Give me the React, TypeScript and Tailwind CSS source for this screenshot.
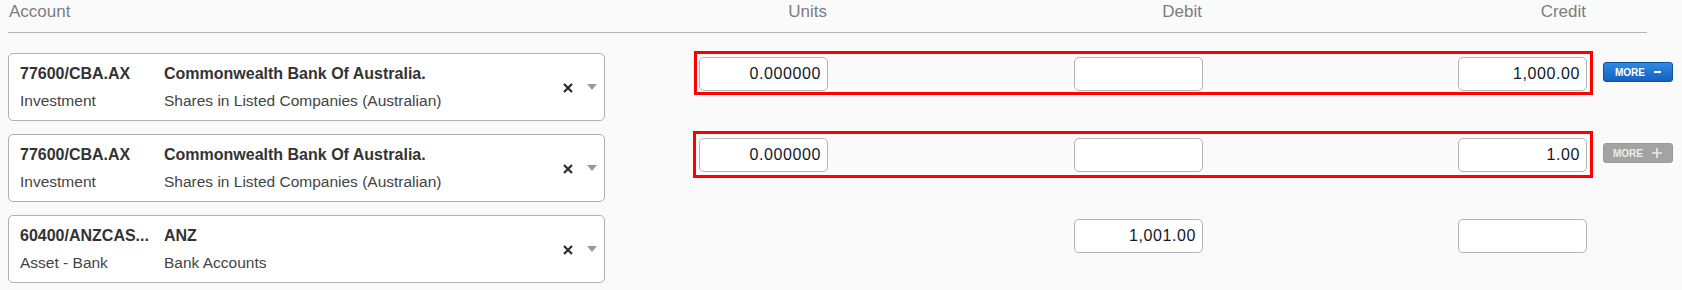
import React from "react";

type Line = {
  code: string;
  name: string;
  type: string;
  group: string;
  units?: string;
  debit: string;
  credit: string;
  showUnits: boolean;
  more?: "open" | "closed";
  mark?: { left: string; top: string; width: string; height: string };
};

const lines: Line[] = [
  {
    code: "77600/CBA.AX",
    name: "Commonwealth Bank Of Australia.",
    type: "Investment",
    group: "Shares in Listed Companies (Australian)",
    units: "0.000000",
    debit: "",
    credit: "1,000.00",
    showUnits: true,
    more: "open",
    mark: { left: "left-[89px]", top: "top-[-2px]", width: "w-[899px]", height: "h-[44px]" },
  },
  {
    code: "77600/CBA.AX",
    name: "Commonwealth Bank Of Australia.",
    type: "Investment",
    group: "Shares in Listed Companies (Australian)",
    units: "0.000000",
    debit: "",
    credit: "1.00",
    showUnits: true,
    more: "closed",
    mark: { left: "left-[88px]", top: "top-[-3px]", width: "w-[900px]", height: "h-[47px]" },
  },
  {
    code: "60400/ANZCAS...",
    name: "ANZ",
    type: "Asset - Bank",
    group: "Bank Accounts",
    debit: "1,001.00",
    credit: "",
    showUnits: false,
  },
];

function AmountBox({ value, className = "" }: { value: string; className?: string }) {
  return (
    <div
      className={`w-[129px] h-[34px] bg-white border border-[#b4b4b4] rounded-[5px] flex items-center justify-end pr-[6px] text-[16px] tracking-[0.6px] text-[#111827] ${className}`}
    >
      {value}
    </div>
  );
}

function MoreButton({ state }: { state: "open" | "closed" }) {
  if (state === "open") {
    return (
      <div className="ml-[16px] mt-[9px] w-[70px] h-[20px] rounded-[3px] border border-[#0f4f9c] bg-gradient-to-b from-[#2f8ae3] to-[#1561c2] flex items-center justify-center gap-[9px] text-white text-[10px] font-bold">
        <span>MORE</span>
        <span className="block w-[7px] h-[2px] bg-white" />
      </div>
    );
  }
  return (
    <div className="ml-[16px] mt-[9px] w-[70px] h-[20px] rounded-[3px] border border-[#999] bg-[#a3a3a3] flex items-center justify-center gap-[8px] text-[#ececec] text-[10px] font-bold">
      <span>MORE</span>
      <svg width="12" height="12" viewBox="0 0 12 12">
        <path d="M6 1v10M1 6h10" stroke="#ececec" strokeWidth="1.6" />
      </svg>
    </div>
  );
}

export default function App() {
  return (
    <div className="w-[1682px] h-[290px] bg-[#fafafa] font-['Liberation_Sans',Arial,sans-serif] overflow-hidden">
      {/* Header */}
      <div className="ml-[8px] w-[1639px] h-[33px] border-b border-[#b5b5b5] flex pt-[1.5px] text-[17px] leading-[20px] text-[#7d7d7d]">
        <div className="w-[597px] pl-[1px]">Account</div>
        <div className="w-[222px] text-right">Units</div>
        <div className="w-[375px] text-right">Debit</div>
        <div className="w-[384px] text-right">Credit</div>
      </div>

      {/* Rows */}
      <div className="mt-[20px] flex flex-col gap-[13px]">
        {lines.map((l, i) => (
          <div key={i} className="flex items-start">
            <div className="ml-[8px] w-[597px] h-[68px] bg-white border border-[#b0b0b0] rounded-[5px] flex items-center pl-[11px] pr-[7px]">
              <div className="flex-1 grid grid-cols-[144px_1fr] text-[16px] leading-[27px] -mt-[1px]">
                <div className="font-bold text-[#333]">{l.code}</div>
                <div className="font-bold text-[#333]">{l.name}</div>
                <div className="text-[#444] text-[15.5px]">{l.type}</div>
                <div className="text-[#444] text-[15.5px]">{l.group}</div>
              </div>
              <svg width="10" height="10" viewBox="0 0 10 10" className="mt-[2px]">
                <path d="M1 1l8 8M9 1l-8 8" stroke="#2b2b2b" strokeWidth="2.2" />
              </svg>
              <svg width="10" height="6" viewBox="0 0 10 6" className="ml-[14px]">
                <path d="M0 0h10L5 6z" fill="#9a9a9a" />
              </svg>
            </div>

            <div className="relative w-[982px] pt-[4px] flex">
              {l.showUnits ? (
                <AmountBox value={l.units ?? ""} className="ml-[94px]" />
              ) : (
                <div className="ml-[94px] w-[129px]" />
              )}
              <AmountBox value={l.debit} className="ml-[246px]" />
              <AmountBox value={l.credit} className="ml-[255px]" />
              {l.mark && (
                <div
                  className={`absolute border-[3px] border-[#ff0000] ${l.mark.left} ${l.mark.top} ${l.mark.width} ${l.mark.height}`}
                />
              )}
            </div>

            {l.more && <MoreButton state={l.more} />}
          </div>
        ))}
      </div>
    </div>
  );
}
